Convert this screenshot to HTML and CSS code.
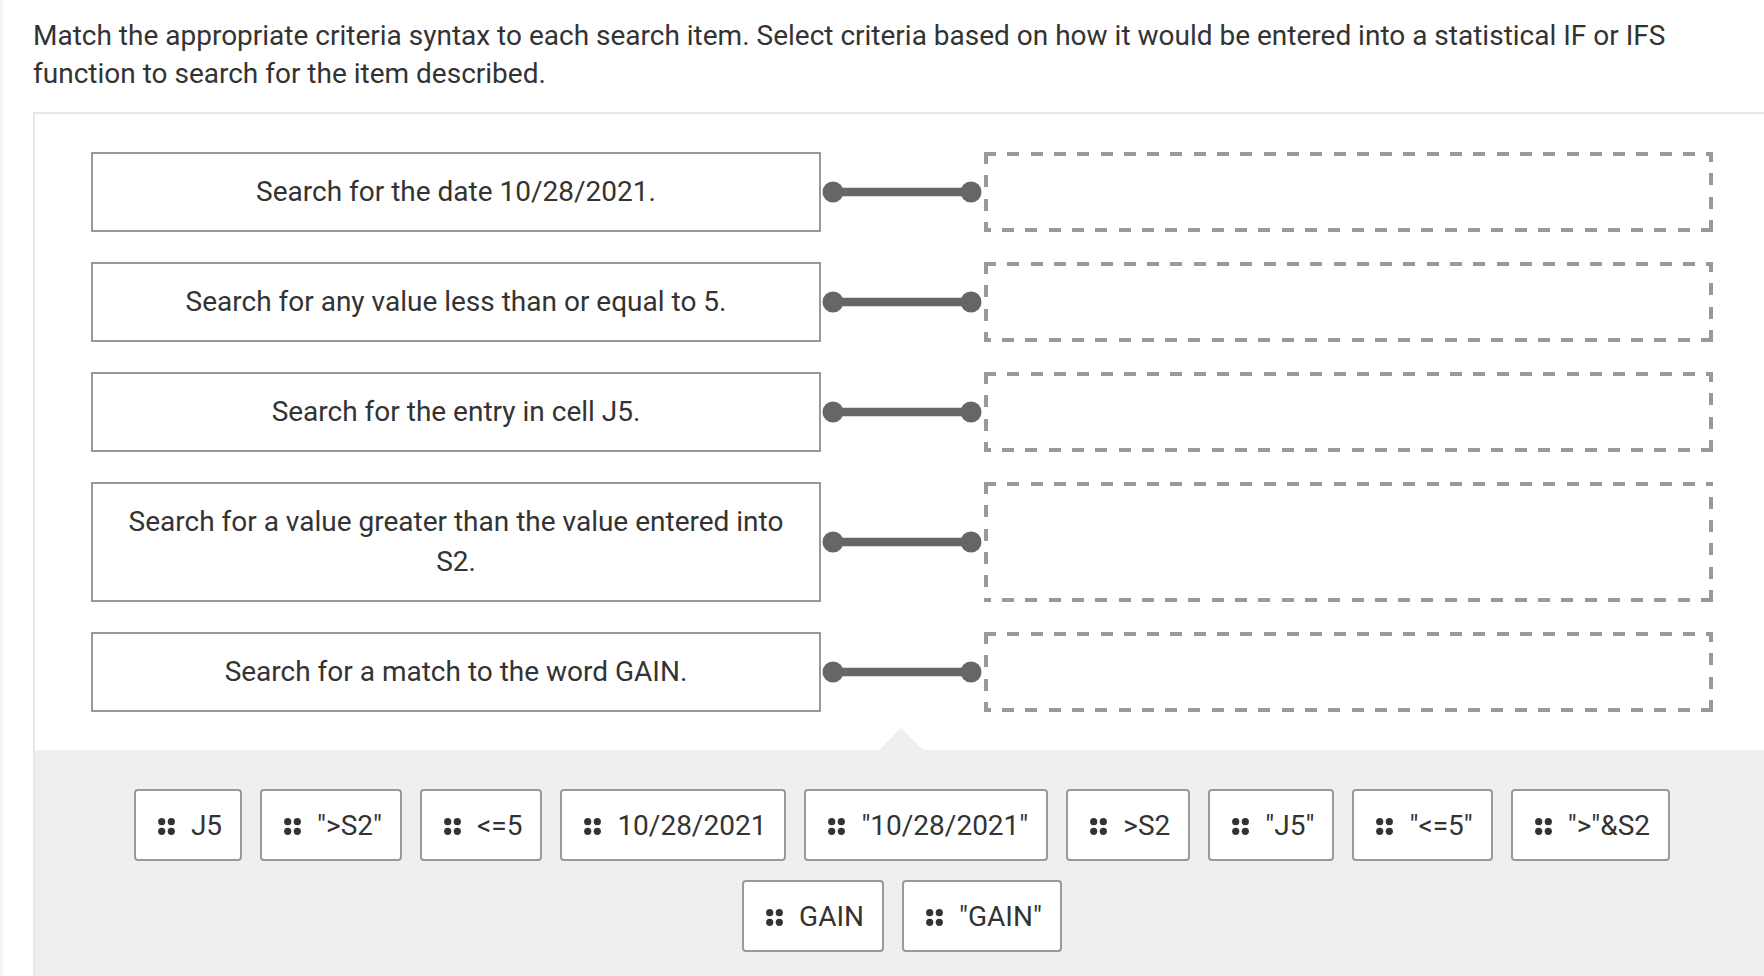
FILE: index.html
```html
<!DOCTYPE html>
<html lang="en">
<head>
<meta charset="utf-8">
<title>Match criteria syntax</title>
<link rel="stylesheet" href="styles.css">
</head>
<body>
<div class="page">
  <p class="prompt">Match the appropriate criteria syntax to each search item. Select criteria based on how it would be entered into a statistical IF or IFS function to search for the item described.</p>
  <div class="activity">
    <div class="pairs">
      <div class="pair">
        <div class="item">Search for the date 10/28/2021.</div>
        <svg class="link" viewBox="0 0 163 24"><line x1="12" y1="12" x2="150" y2="12"/><circle cx="12" cy="12" r="10.5"/><circle cx="150" cy="12" r="10.5"/></svg>
        <div class="drop"></div>
      </div>
      <div class="pair">
        <div class="item">Search for any value less than or equal to 5.</div>
        <svg class="link" viewBox="0 0 163 24"><line x1="12" y1="12" x2="150" y2="12"/><circle cx="12" cy="12" r="10.5"/><circle cx="150" cy="12" r="10.5"/></svg>
        <div class="drop"></div>
      </div>
      <div class="pair">
        <div class="item">Search for the entry in cell J5.</div>
        <svg class="link" viewBox="0 0 163 24"><line x1="12" y1="12" x2="150" y2="12"/><circle cx="12" cy="12" r="10.5"/><circle cx="150" cy="12" r="10.5"/></svg>
        <div class="drop"></div>
      </div>
      <div class="pair">
        <div class="item">Search for a value greater than the value entered into S2.</div>
        <svg class="link" viewBox="0 0 163 24"><line x1="12" y1="12" x2="150" y2="12"/><circle cx="12" cy="12" r="10.5"/><circle cx="150" cy="12" r="10.5"/></svg>
        <div class="drop"></div>
      </div>
      <div class="pair">
        <div class="item">Search for a match to the word GAIN.</div>
        <svg class="link" viewBox="0 0 163 24"><line x1="12" y1="12" x2="150" y2="12"/><circle cx="12" cy="12" r="10.5"/><circle cx="150" cy="12" r="10.5"/></svg>
        <div class="drop"></div>
      </div>
    </div>
    <div class="bank">
      <div class="chip"><svg class="grip" viewBox="0 0 17 17"><circle cx="3.7" cy="3.7" r="3.6"/><circle cx="13.3" cy="3.7" r="3.6"/><circle cx="3.7" cy="13.3" r="3.6"/><circle cx="13.3" cy="13.3" r="3.6"/></svg><span>J5</span></div>
      <div class="chip"><svg class="grip" viewBox="0 0 17 17"><circle cx="3.7" cy="3.7" r="3.6"/><circle cx="13.3" cy="3.7" r="3.6"/><circle cx="3.7" cy="13.3" r="3.6"/><circle cx="13.3" cy="13.3" r="3.6"/></svg><span>"&gt;S2"</span></div>
      <div class="chip"><svg class="grip" viewBox="0 0 17 17"><circle cx="3.7" cy="3.7" r="3.6"/><circle cx="13.3" cy="3.7" r="3.6"/><circle cx="3.7" cy="13.3" r="3.6"/><circle cx="13.3" cy="13.3" r="3.6"/></svg><span>&lt;=5</span></div>
      <div class="chip"><svg class="grip" viewBox="0 0 17 17"><circle cx="3.7" cy="3.7" r="3.6"/><circle cx="13.3" cy="3.7" r="3.6"/><circle cx="3.7" cy="13.3" r="3.6"/><circle cx="13.3" cy="13.3" r="3.6"/></svg><span>10/28/2021</span></div>
      <div class="chip"><svg class="grip" viewBox="0 0 17 17"><circle cx="3.7" cy="3.7" r="3.6"/><circle cx="13.3" cy="3.7" r="3.6"/><circle cx="3.7" cy="13.3" r="3.6"/><circle cx="13.3" cy="13.3" r="3.6"/></svg><span>"10/28/2021"</span></div>
      <div class="chip"><svg class="grip" viewBox="0 0 17 17"><circle cx="3.7" cy="3.7" r="3.6"/><circle cx="13.3" cy="3.7" r="3.6"/><circle cx="3.7" cy="13.3" r="3.6"/><circle cx="13.3" cy="13.3" r="3.6"/></svg><span>&gt;S2</span></div>
      <div class="chip"><svg class="grip" viewBox="0 0 17 17"><circle cx="3.7" cy="3.7" r="3.6"/><circle cx="13.3" cy="3.7" r="3.6"/><circle cx="3.7" cy="13.3" r="3.6"/><circle cx="13.3" cy="13.3" r="3.6"/></svg><span>"J5"</span></div>
      <div class="chip"><svg class="grip" viewBox="0 0 17 17"><circle cx="3.7" cy="3.7" r="3.6"/><circle cx="13.3" cy="3.7" r="3.6"/><circle cx="3.7" cy="13.3" r="3.6"/><circle cx="13.3" cy="13.3" r="3.6"/></svg><span>"&lt;=5"</span></div>
      <div class="chip"><svg class="grip" viewBox="0 0 17 17"><circle cx="3.7" cy="3.7" r="3.6"/><circle cx="13.3" cy="3.7" r="3.6"/><circle cx="3.7" cy="13.3" r="3.6"/><circle cx="13.3" cy="13.3" r="3.6"/></svg><span>"&gt;"&amp;S2</span></div>
      <div class="chip"><svg class="grip" viewBox="0 0 17 17"><circle cx="3.7" cy="3.7" r="3.6"/><circle cx="13.3" cy="3.7" r="3.6"/><circle cx="3.7" cy="13.3" r="3.6"/><circle cx="13.3" cy="13.3" r="3.6"/></svg><span>GAIN</span></div>
      <div class="chip"><svg class="grip" viewBox="0 0 17 17"><circle cx="3.7" cy="3.7" r="3.6"/><circle cx="13.3" cy="3.7" r="3.6"/><circle cx="3.7" cy="13.3" r="3.6"/><circle cx="13.3" cy="13.3" r="3.6"/></svg><span>"GAIN"</span></div>
    </div>
  </div>
</div>
</body>
</html>
```

FILE: styles.css
```css
html, body {
  margin: 0;
  padding: 0;
  overflow: hidden;
  background: #fff;
}

body {
  font-family: Roboto, "Liberation Sans", Arial, sans-serif;
  color: #333;
}

.page {
  border-left: 3px solid #f3f3f3;
  padding-left: 30px;
  min-height: 976px;
  box-sizing: border-box;
}

.prompt {
  margin: 0 0 19px 0;
  padding-top: 17px;
  font-size: 28px;
  line-height: 38px;
  width: 1700px;
}

.activity {
  width: 1738px;
  border: 2px solid #e8e8e8;
  border-bottom: none;
  box-sizing: border-box;
}

.pairs {
  display: flex;
  flex-direction: column;
  gap: 30px;
  padding: 38px 56px;
  background: #fff;
}

.pair {
  display: flex;
  align-items: center;
}

.item {
  width: 730px;
  flex: none;
  box-sizing: border-box;
  border: 2px solid #999;
  padding: 18px 24px;
  text-align: center;
  font-size: 28px;
  line-height: 40px;
  background: #fff;
}

.link {
  width: 163px;
  height: 24px;
  flex: none;
  fill: #666;
  stroke: #666;
}

.link line {
  stroke-width: 8.5;
}

.link circle {
  stroke: none;
}

.drop {
  flex: 1;
  align-self: stretch;
  background:
    repeating-linear-gradient(to right, #999 0 12px, transparent 12px 23.3px) left top / 100% 4px no-repeat,
    repeating-linear-gradient(to left, #999 0 12px, transparent 12px 23.3px) left bottom / 100% 4px no-repeat,
    repeating-linear-gradient(to bottom, #999 0 12px, transparent 12px 23.3px) left top / 4px 100% no-repeat,
    repeating-linear-gradient(to top, #999 0 12px, transparent 12px 23.3px) right top / 4px 100% no-repeat;
}

.bank {
  position: relative;
  background: #efefef;
  display: flex;
  flex-wrap: wrap;
  justify-content: center;
  gap: 19px 18px;
  padding: 39px 60px 60px;
}

.bank::before {
  content: "";
  position: absolute;
  top: -22px;
  left: 50%;
  margin-left: -23px;
  border-left: 22px solid transparent;
  border-right: 22px solid transparent;
  border-bottom: 22px solid #efefef;
}

.chip {
  display: flex;
  align-items: center;
  height: 72px;
  box-sizing: border-box;
  border: 2px solid #999;
  border-radius: 4px;
  background: #fff;
  padding: 2px 18px 0 22px;
  font-size: 28px;
  line-height: 40px;
  color: #333;
}

.grip {
  width: 17px;
  height: 17px;
  margin-right: 16px;
  fill: #333;
  flex: none;
}
```
